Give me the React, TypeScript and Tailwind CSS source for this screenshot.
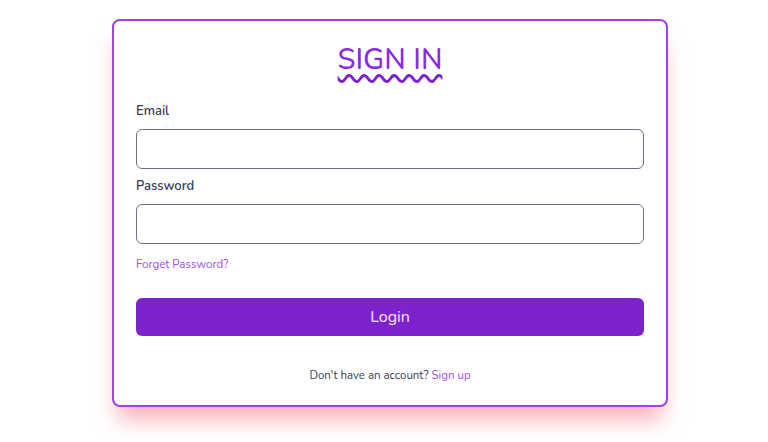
export default function App() {
  return (
    <div
      className="min-h-screen bg-white flex justify-center pl-3 pt-[19px]"
      style={{ fontFamily: "Nunito, Lato, 'Open Sans', sans-serif" }}
    >
      <div className="w-[556px] h-[388px] border-2 border-[#a23ef0] rounded-lg bg-white shadow-[0_18px_22px_-6px_rgba(240,90,110,0.5)] px-[22px] pt-[21px]">
        <h1 className="text-center text-[29px] leading-9 font-medium text-[#8a2be2] underline decoration-wavy decoration-[2.5px] underline-offset-[5px] decoration-[#7e22ce]">
          SIGN IN
        </h1>

        <form className="mt-[23px] flex flex-col">
          <label className="text-[13px] leading-5 font-semibold text-gray-700 mb-2">Email</label>
          <input
            type="email"
            className="h-10 w-full rounded-md border border-gray-500 outline-none px-3"
          />

          <label className="mt-[7px] text-[13px] leading-5 font-semibold text-gray-700 mb-2">Password</label>
          <input
            type="password"
            className="h-10 w-full rounded-md border border-gray-500 outline-none px-3"
          />

          <a href="#" className="mt-3 text-[11.5px] leading-4 text-[#a24bea] self-start">
            Forget Password?
          </a>

          <button
            type="button"
            className="mt-[26px] h-[38px] w-full rounded-md bg-[#7e22ce] text-base text-purple-100"
          >
            Login
          </button>

          <p className="mt-[30px] text-center text-[11.5px] leading-[18px] text-gray-700">
            Don't have an account? <a href="#" className="text-[#a24bea]">Sign up</a>
          </p>
        </form>
      </div>
    </div>
  );
}
